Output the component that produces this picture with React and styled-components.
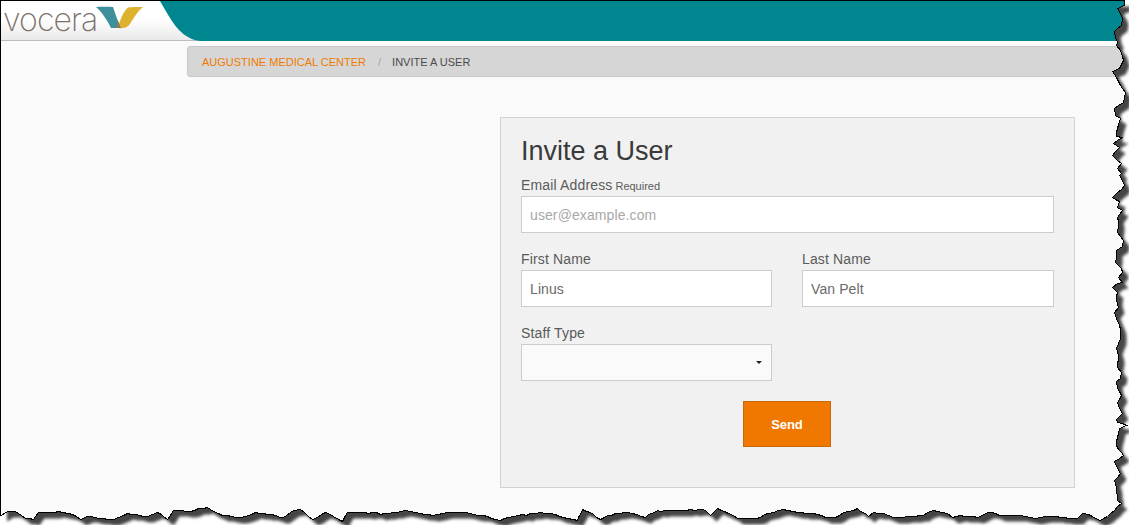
import styled, { createGlobalStyle } from 'styled-components';

const GlobalStyle = createGlobalStyle`
  html, body {
    margin: 0;
    padding: 0;
    background: #fff;
  }
  body {
    font-family: "Liberation Sans", Arial, sans-serif;
  }
  * {
    box-sizing: border-box;
  }
`;

const Page = styled.div`
  position: relative;
  width: 1129px;
  height: 525px;
  overflow: hidden;
  background: #fafafa;
  padding-top: 1px;
`;

const Header = styled.header`
  display: flex;
  height: 40px;
`;

const Brand = styled.div`
  display: flex;
  align-items: flex-start;
  width: 200px;
  flex: none;
  position: relative;
  background: linear-gradient(#fff 45%, #e9e9e9);
  border-bottom: 1px solid #bdbdbd;
`;

const Wordmark = styled.span`
  display: block;
  flex: none;
  width: 93px;
  font-family: Inter, "Liberation Sans", sans-serif;
  font-weight: 200;
  font-size: 32px;
  line-height: 37px;
  color: #7d716b;
  margin-left: 3px;
  letter-spacing: -0.9px;
`;

const Mark = styled.svg`
  flex: none;
  margin-top: 4px;
`;

const Curve = styled.svg`
  position: absolute;
  left: 160px;
  top: 0;
`;

const Band = styled.div`
  flex: 1;
  background: #00868f;
`;

const Breadcrumb = styled.nav`
  display: flex;
  align-items: center;
  height: 31px;
  margin: 5px 0 0 187px;
  padding-left: 14px;
  background: #d6d6d6;
  border: 1px solid #c9c9c9;
  border-radius: 3px 0 0 3px;
  font-size: 11px;
  text-transform: uppercase;
`;

const Crumb = styled.span`
  color: ${(p) => (p.$active ? '#f07a00' : '#4a4a4a')};
`;

const Slash = styled.span`
  color: #a5a5a5;
  padding: 0 11px 0 12px;
`;

const Card = styled.section`
  width: 575px;
  height: 371px;
  margin: 40px 0 0 500px;
  padding: 16px 20px 0;
  background: #f1f1f1;
  border: 1px solid #d2d2d2;
`;

const Title = styled.h1`
  margin: 0 0 7px;
  font-size: 27px;
  line-height: 34px;
  font-weight: 400;
  color: #3a3a3a;
`;

const Row = styled.div`
  display: grid;
  grid-template-columns: ${(p) => (p.$single ? '1fr' : '251px 252px')};
  column-gap: 30px;
`;

const Field = styled.div`
  margin-bottom: 16px;
`;

const Label = styled.label`
  display: block;
  height: 20px;
  margin-bottom: 1px;
  font-size: 14px;
  line-height: 20px;
  letter-spacing: 0.15px;
  color: #5a5a5a;
`;

const Hint = styled.small`
  font-size: 11px;
  letter-spacing: 0;
  margin-left: 3px;
`;

const Input = styled.input`
  display: block;
  width: 100%;
  height: 37px;
  padding: 0 8px;
  background: #fff;
  border: 1px solid #ccc;
  border-radius: 0;
  outline: none;
  font: 14px "Liberation Sans", Arial, sans-serif;
  letter-spacing: 0.1px;
  color: #6a6a6a;

  &::placeholder {
    color: #a8a8a8;
    opacity: 1;
  }
`;

const Select = styled.button`
  display: flex;
  align-items: center;
  justify-content: flex-end;
  width: 100%;
  height: 37px;
  padding: 0 9px 0 0;
  background: #fafafa;
  border: 1px solid #ccc;
  border-radius: 0;
`;

const Caret = styled.span`
  width: 0;
  height: 0;
  border-left: 3px solid transparent;
  border-right: 3px solid transparent;
  border-top: 3px solid #222;
`;

const Actions = styled.div`
  display: flex;
  justify-content: center;
  margin-top: 4px;
  padding-right: 1px;
`;

const Send = styled.button`
  width: 88px;
  height: 46px;
  background: #f07800;
  border: 1px solid #c96a08;
  border-radius: 0;
  color: #fff;
  font: bold 13px "Liberation Sans", Arial, sans-serif;
  letter-spacing: -0.1px;
`;

const Torn = styled.svg`
  position: absolute;
  left: 0;
  top: 0;
`;

// traced outline of the torn screenshot edge, clockwise from the top right
const EDGE = [
  [1124, 0], [1124, 5], [1117, 8], [1120, 13], [1122, 18], [1121, 25], [1114, 31], [1115, 37],
  [1117, 42], [1116, 45], [1120, 50], [1123, 60], [1119, 68], [1112, 71], [1116, 77], [1122, 88],
  [1125, 92], [1123, 102], [1114, 108], [1115, 115], [1120, 118], [1117, 128], [1116, 136], [1122, 137],
  [1113, 143], [1119, 147], [1112, 155], [1117, 160], [1121, 163], [1117, 168], [1121, 173], [1119, 175],
  [1122, 180], [1124, 185], [1117, 192], [1112, 197], [1119, 201], [1117, 207], [1122, 210], [1117, 217],
  [1118, 225], [1117, 232], [1123, 240], [1122, 246], [1116, 250], [1116, 257], [1115, 262], [1121, 268],
  [1122, 272], [1118, 277], [1122, 282], [1117, 283], [1112, 287], [1117, 292], [1116, 300], [1118, 307],
  [1114, 312], [1116, 318], [1119, 325], [1120, 338], [1116, 348], [1118, 355], [1117, 367], [1121, 372],
  [1120, 378], [1116, 381], [1117, 388], [1121, 395], [1117, 402], [1119, 408], [1122, 413], [1116, 419],
  [1117, 422], [1126, 425], [1119, 428], [1117, 437], [1116, 445], [1123, 455], [1114, 461], [1117, 468],
  [1120, 473], [1114, 480], [1116, 488], [1117, 500], [1121, 503], [1110, 513], [1100, 520], [1088, 514],
  [1082, 513], [1077, 518], [1060, 517], [1050, 516], [1035, 518], [1020, 515], [1003, 515], [987, 512],
  [977, 517], [960, 515], [952, 517], [947, 513], [933, 510], [923, 515], [907, 516], [893, 517],
  [883, 513], [873, 512], [868, 516], [857, 508], [843, 512], [835, 517], [825, 517], [817, 514],
  [797, 512], [783, 509], [768, 513], [760, 517], [747, 518], [737, 518], [728, 513], [717, 508],
  [710, 515], [703, 509], [677, 510], [657, 510], [645, 517], [627, 512], [607, 515], [600, 519],
  [590, 512], [582, 509], [577, 520], [563, 517], [550, 513], [535, 513], [513, 516], [500, 520],
  [487, 516], [460, 512], [447, 512], [432, 515], [420, 513], [405, 510], [380, 514], [372, 512],
  [347, 512], [342, 521], [325, 512], [312, 519], [300, 509], [293, 510], [283, 517], [263, 513],
  [255, 512], [240, 517], [222, 515], [207, 507], [190, 511], [173, 510], [167, 519], [157, 512],
  [147, 516], [127, 513], [113, 519], [107, 519], [87, 516], [80, 519], [72, 514], [58, 511],
  [38, 512], [33, 519], [25, 518], [15, 511], [7, 511], [0.5, 515],
];

// roughen the traced line a little so it keeps the pixel-level jaggedness
const roughen = (points) => {
  let seed = 17;
  const next = () => {
    seed = (seed * 137 + 59) % 1009;
    return seed / 1009 - 0.5;
  };
  const out = [];
  points.forEach(([x, y], i) => {
    out.push([x, y]);
    const after = points[i + 1];
    if (!after) return;
    const steps = Math.floor(Math.hypot(after[0] - x, after[1] - y) / 4);
    for (let s = 1; s < steps; s++) {
      const t = s / steps;
      out.push([
        Math.round(x + (after[0] - x) * t + next() * 1.2),
        Math.round(y + (after[1] - y) * t + next() * 1.2),
      ]);
    }
  });
  return out;
};

const outline =
  'M0.5,0.5 ' + roughen(EDGE).map(([x, y]) => `L${x + 0.5},${y + 0.5}`).join(' ') + ' Z';
const outside = `M0,0 H1129 V525 H0 Z ${outline}`;

const TornEdge = () => (
  <Torn width="1129" height="525" viewBox="0 0 1129 525">
    <defs>
      <clipPath id="outside">
        <path d={outside} clipRule="evenodd" />
      </clipPath>
      <filter id="soft" x="-5%" y="-5%" width="110%" height="110%">
        <feGaussianBlur stdDeviation="1.8" />
      </filter>
    </defs>
    <path d={outside} fill="#fff" fillRule="evenodd" />
    <g clipPath="url(#outside)">
      <path d={outline} fill="#444" transform="translate(6 6)" filter="url(#soft)" />
    </g>
    <path d={outline} fill="none" stroke="#000" strokeWidth="1" shapeRendering="crispEdges" />
  </Torn>
);

const Logo = () => (
  <>
    <Wordmark>vocera</Wordmark>
    <Mark width="50" height="26" viewBox="0 0 50 26">
      <path d="M0,2 C6,1.5 12,1.5 17,2 C19,8 22,17 25,23 L15,23 C11,15 6,7 0,2 Z" fill="#3d8f9b" />
      <path d="M47,2 C41,2 37,2 32,2.5 C27,7 24,15 22,23 C27,24 31,23 34,19 C38,12 42,6 47,2 Z" fill="#dfb22e" />
      <path d="M15,23 L20,23 C21,20 21.5,18 22,16 L25,23 Z" fill="#8a7b5e" />
    </Mark>
    <Curve width="42" height="40" viewBox="0 0 42 40">
      <path d="M0,0 C7,12 16,30 28,36 C32,38.5 37,40 42,40 L42,0 Z" fill="#00868f" />
    </Curve>
  </>
);

const App = () => {
  return (
    <>
      <GlobalStyle />
      <Page>
        <Header>
          <Brand>
            <Logo />
          </Brand>
          <Band />
        </Header>
        <Breadcrumb>
          <Crumb $active>Augustine Medical Center</Crumb>
          <Slash>/</Slash>
          <Crumb>Invite a User</Crumb>
        </Breadcrumb>
        <Card>
          <Title>Invite a User</Title>
          <Row $single>
            <Field>
              <Label>
                Email Address<Hint>Required</Hint>
              </Label>
              <Input placeholder="user@example.com" />
            </Field>
          </Row>
          <Row>
            <Field>
              <Label>First Name</Label>
              <Input defaultValue="Linus" />
            </Field>
            <Field>
              <Label>Last Name</Label>
              <Input defaultValue="Van Pelt" />
            </Field>
          </Row>
          <Row>
            <Field>
              <Label>Staff Type</Label>
              <Select type="button">
                <Caret />
              </Select>
            </Field>
          </Row>
          <Actions>
            <Send type="button">Send</Send>
          </Actions>
        </Card>
        <TornEdge />
      </Page>
    </>
  );
};

export default App;
